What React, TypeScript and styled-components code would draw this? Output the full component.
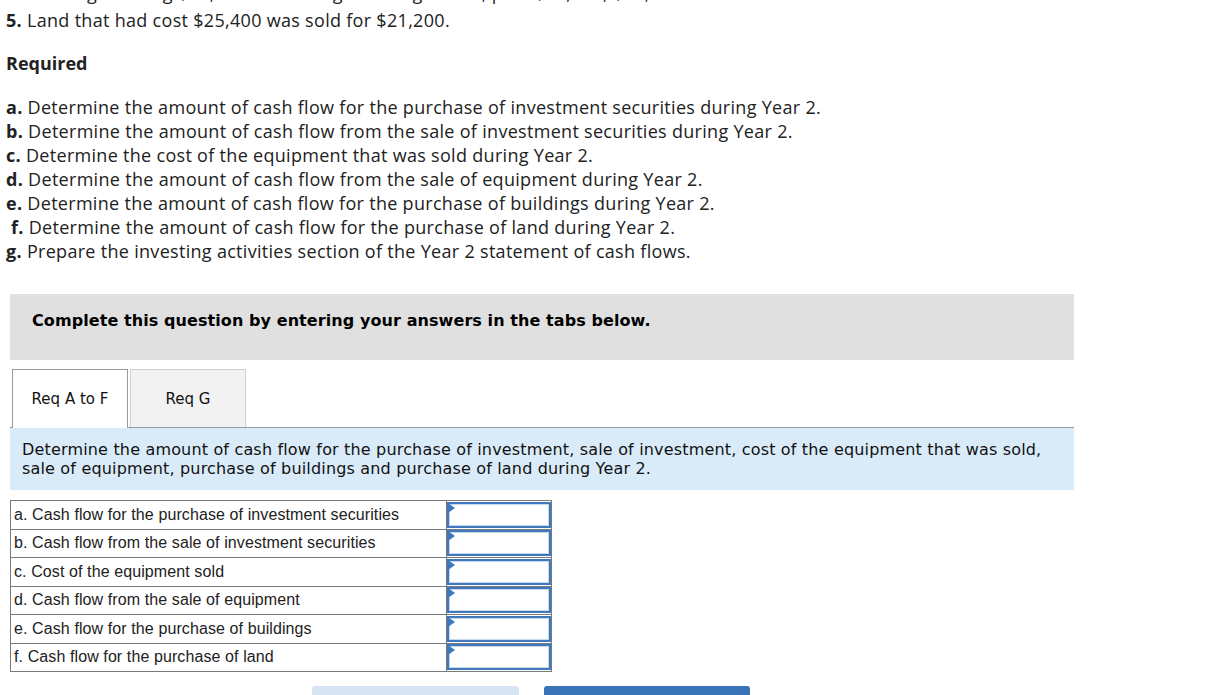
import styled, { createGlobalStyle } from "styled-components"

const GlobalStyle = createGlobalStyle`
    html, body {
        margin: 0;
        padding: 0;
        background: #fff;
        overflow: hidden;
    }
    body {
        font-family: "Open Sans", "Lato", sans-serif;
        color: #222;
    }
`

const Page = styled.div`
    width: 1221px;
    height: 695px;
    overflow: hidden;
`

const Question = styled.div`
    padding-left: 6px;
    font-size: 18px;
    line-height: 24px;
    letter-spacing: 0.3px;
    color: #222;
`

const ClippedLine = styled.p`
    margin: -19px 0 3px;
    white-space: nowrap;
`

const Line = styled.p`
    margin: 0;
    white-space: nowrap;
`

const Required = styled.h4`
    margin: 19px 0 20px;
    font-size: 18px;
    font-weight: 700;
    line-height: 24px;
    letter-spacing: 0;
`

const Instruction = styled.div`
    margin: 31px 0 0 10px;
    width: 1064px;
    height: 66px;
    box-sizing: border-box;
    padding: 0 0 14px 22px;
    display: flex;
    align-items: center;
    background: #e0e0e0;
    font-family: "DejaVu Sans", Verdana, sans-serif;
    font-weight: 700;
    font-size: 16px;
    letter-spacing: 0.08px;
    color: #000;
`

const TabBar = styled.div`
    margin: 9px 0 0 10px;
    width: 1064px;
    display: flex;
    align-items: flex-end;
    border-bottom: 1px solid #9a9a9a;
    padding-left: 2px;
    box-sizing: border-box;
    gap: 2px;
`

const Tab = styled.div<{ active?: boolean }>`
    width: 116px;
    box-sizing: border-box;
    display: flex;
    align-items: center;
    justify-content: center;
    font-family: "DejaVu Sans", Verdana, sans-serif;
    font-size: 15px;
    color: #111;
    background: ${({ active }) => (active ? "#fff" : "#f2f2f2")};
    border: 1px solid ${({ active }) => (active ? "#9a9a9a" : "#cfcfcf")};
    border-bottom: none;
    margin-bottom: ${({ active }) => (active ? "-1px" : "0")};
    height: ${({ active }) => (active ? "59px" : "58px")};
`

const Prompt = styled.div`
    margin-left: 10px;
    width: 1064px;
    box-sizing: border-box;
    padding: 12px 12px;
    background: #d9ebf9;
    font-family: "DejaVu Sans", Verdana, sans-serif;
    font-size: 16px;
    letter-spacing: 0.17px;
    line-height: 19px;
    color: #111;
`

const AnswerTable = styled.table`
    margin: 10px 0 0 10px;
    border-collapse: collapse;
    font-family: "Liberation Sans", Arial, sans-serif;
    font-size: 16px;
    letter-spacing: 0.1px;
    color: #222;
`

const LabelCell = styled.td`
    width: 436px;
    height: 28.5px;
    padding: 0 0 0 3px;
    border: 1px solid #7a7a7a;
    box-sizing: border-box;
    white-space: nowrap;
`

const InputCell = styled.td`
    width: 104px;
    padding: 0;
    border: 1px solid #7a7a7a;
`

const AnswerInput = styled.div`
    height: 26px;
    box-sizing: border-box;
    border: 2px solid #3f78bc;
    box-shadow: inset 0 0 0 1px #c5d8ee;
    background: #fff;
    position: relative;
`

const Flag = styled.span`
    position: absolute;
    left: -1px;
    top: -1px;
    width: 0;
    height: 0;
    border-top: 5px solid transparent;
    border-bottom: 5px solid transparent;
    border-left: 7px solid #3f78bc;
`

const ButtonRow = styled.div`
    margin: 14px 0 0 312px;
    display: flex;
    gap: 25px;
`

const NavButton = styled.div<{ primary?: boolean }>`
    width: ${({ primary }) => (primary ? "206px" : "207px")};
    height: 40px;
    border-radius: 3px;
    background: ${({ primary }) => (primary ? "#3873b7" : "#d6e3f2")};
`

const letters = [
    ["a.", "Determine the amount of cash flow for the purchase of investment securities during Year 2."],
    ["b.", "Determine the amount of cash flow from the sale of investment securities during Year 2."],
    ["c.", "Determine the cost of the equipment that was sold during Year 2."],
    ["d.", "Determine the amount of cash flow from the sale of equipment during Year 2."],
    ["e.", "Determine the amount of cash flow for the purchase of buildings during Year 2."],
    ["f.", "Determine the amount of cash flow for the purchase of land during Year 2."],
    ["g.", "Prepare the investing activities section of the Year 2 statement of cash flows."],
]

const rows = [
    "a. Cash flow for the purchase of investment securities",
    "b. Cash flow from the sale of investment securities",
    "c. Cost of the equipment sold",
    "d. Cash flow from the sale of equipment",
    "e. Cash flow for the purchase of buildings",
    "f. Cash flow for the purchase of land",
]

export default function App() {
    return (
        <Page>
            <GlobalStyle />
            <Question>
                <ClippedLine>4. Buildings costing $96,000 were bought during Year 2, paid $31,000, $45,600.</ClippedLine>
                <Line><b>5.</b> Land that had cost $25,400 was sold for $21,200.</Line>
                <Required>Required</Required>
                {letters.map(([l, t]) => (
                    <Line key={l}>{l === "f." ? "\u00a0" : ""}<b>{l}</b> {t}</Line>
                ))}
            </Question>
            <Instruction>Complete this question by entering your answers in the tabs below.</Instruction>
            <TabBar>
                <Tab active>Req A to F</Tab>
                <Tab>Req G</Tab>
            </TabBar>
            <Prompt>
                Determine the amount of cash flow for the purchase of investment, sale of investment, cost of the equipment that was sold,
                <br />
                sale of equipment, purchase of buildings and purchase of land during Year 2.
            </Prompt>
            <AnswerTable>
                <tbody>
                    {rows.map((r) => (
                        <tr key={r}>
                            <LabelCell>{r}</LabelCell>
                            <InputCell>
                                <AnswerInput>
                                    <Flag />
                                </AnswerInput>
                            </InputCell>
                        </tr>
                    ))}
                </tbody>
            </AnswerTable>
            <ButtonRow>
                <NavButton />
                <NavButton primary />
            </ButtonRow>
        </Page>
    )
}
